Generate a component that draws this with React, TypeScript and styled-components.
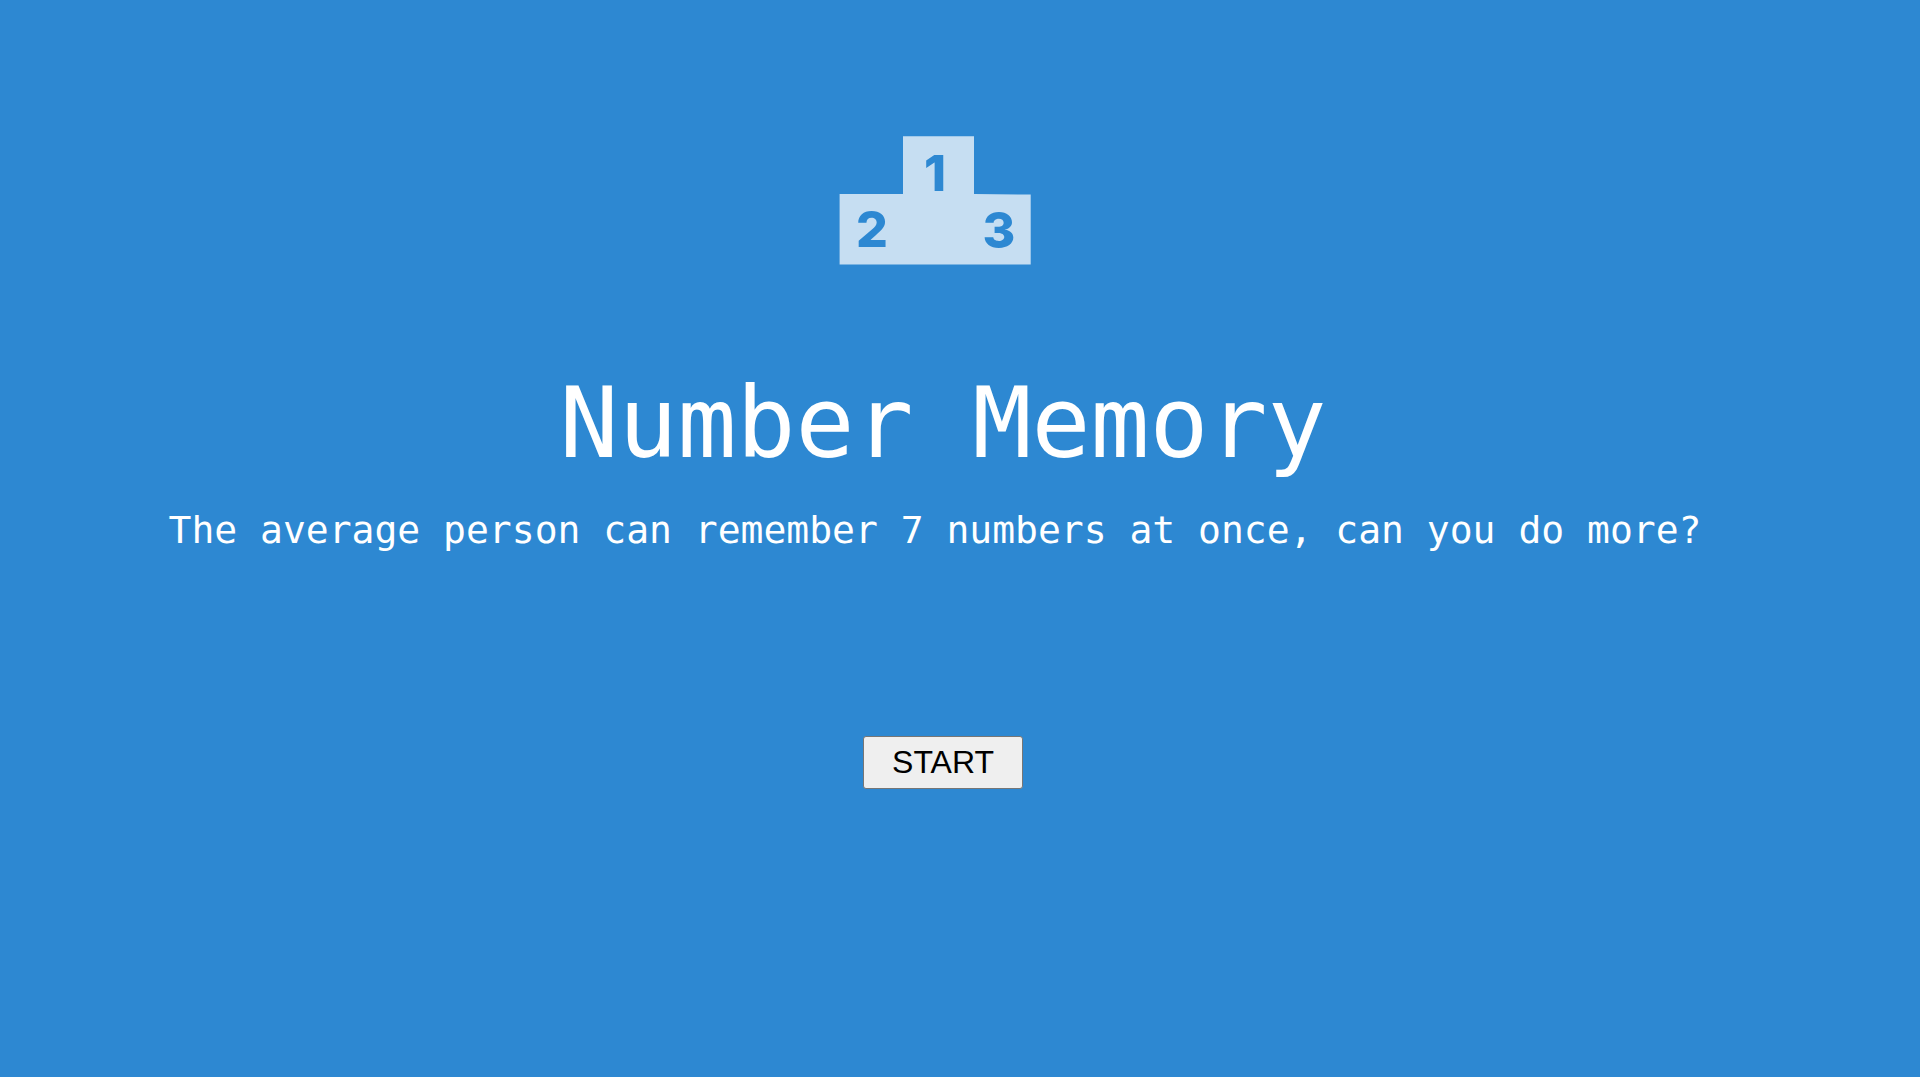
import React from "react";
import styled, { createGlobalStyle } from "styled-components";

const blue = "#2d88d2";

const GlobalStyle = createGlobalStyle`
  body {
    margin: 0;
    background: ${blue};
  }
`;

const Screen = styled.main`
  box-sizing: border-box;
  min-height: 100vh;
  padding: 136px 50px 0 0;
  display: flex;
  flex-direction: column;
  align-items: center;
  background: ${blue};
  color: #fff;
  font-family: "DejaVu Sans Mono", monospace;
  text-align: center;
`;

const Podium = styled.svg`
  display: block;
  width: 192px;
  height: 129px;
`;

const Digit = styled.text`
  fill: ${blue};
  font-family: Inter, sans-serif;
  font-size: 50px;
  font-weight: 800;
  text-anchor: middle;
`;

const Title = styled.h1`
  margin: 98px 0 0;
  padding-left: 16px;
  font-size: 98px;
  line-height: 120px;
  font-weight: 400;
`;

const Tagline = styled.p`
  margin: 23px 0 0;
  font-size: 38px;
  line-height: 48px;
`;

const StartButton = styled.button`
  margin: 182px 0 0 16px;
  padding: 0 28px 2px;
  min-width: 160px;
  height: 53px;
  border: 1px solid #767676;
  border-radius: 3px;
  background: #efefef;
  color: #000;
  font-family: "Liberation Sans", Arial, sans-serif;
  font-size: 32px;
  line-height: 40px;
  cursor: pointer;
`;

export default function App() {
  return (
    <>
      <GlobalStyle />
      <Screen>
        <Podium viewBox="0 0 192 129" role="img" aria-label="Winners' podium">
          <path d="M0.600 58H64V0.300H135V58L191.700 58.600V128.400H0.600Z" fill="#c6def2" />
          <Digit x="96" y="55">1</Digit>
          <Digit x="33" y="111">2</Digit>
          <Digit x="160" y="112">3</Digit>
        </Podium>
        <Title>Number Memory</Title>
        <Tagline>The average person can remember 7 numbers at once, can you do more?</Tagline>
        <StartButton type="button">START</StartButton>
      </Screen>
    </>
  );
}
